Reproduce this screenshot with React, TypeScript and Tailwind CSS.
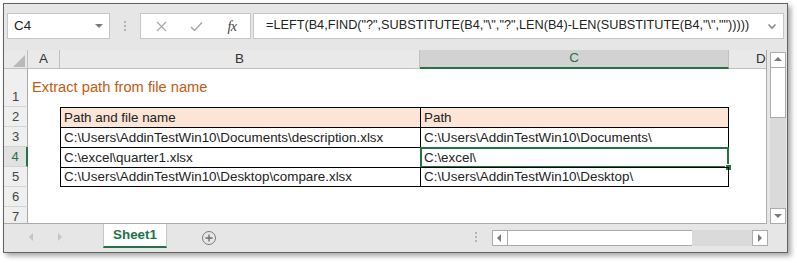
import React from "react"

interface Row {
  n: number
  h: number
  b?: string
  c?: string
  head?: boolean
  sel?: boolean
  last?: boolean
}

const rows: Row[] = [
  { n: 1, h: 38 },
  { n: 2, h: 20, b: "Path and file name", c: "Path", head: true },
  { n: 3, h: 20, b: "C:\\Users\\AddinTestWin10\\Documents\\description.xlsx", c: "C:\\Users\\AddinTestWin10\\Documents\\" },
  { n: 4, h: 20, b: "C:\\excel\\quarter1.xlsx", c: "C:\\excel\\", sel: true },
  { n: 5, h: 20, b: "C:\\Users\\AddinTestWin10\\Desktop\\compare.xlsx", c: "C:\\Users\\AddinTestWin10\\Desktop\\", last: true },
  { n: 6, h: 20 },
  { n: 7, h: 20 },
]

const formula = '=LEFT(B4,FIND("?",SUBSTITUTE(B4,"\\","?",LEN(B4)-LEN(SUBSTITUTE(B4,"\\","")))))'

function Arrow({ dir, color = "#7b7b7b" }: { dir: "up" | "down" | "left" | "right"; color?: string }) {
  const pts = {
    up: "1,6 5,2 9,6",
    down: "1,3 5,7 9,3",
    left: "6,1 2,5 6,9",
    right: "3,1 7,5 3,9",
  }[dir]
  return (
    <svg width="10" height="10" viewBox="0 0 10 10">
      <polygon points={pts} fill={color} />
    </svg>
  )
}

function ScrollBtn({ dir, className = "" }: { dir: "up" | "down" | "left" | "right"; className?: string }) {
  return (
    <div className={`w-[16px] h-[16px] shrink-0 bg-white border border-[#ababab] flex items-center justify-center ${className}`}>
      <Arrow dir={dir} />
    </div>
  )
}

export default function App() {
  return (
    <div className="w-[797px] h-[263px] bg-white pt-[3px] pl-[3px] font-['Liberation_Sans',Arial,sans-serif] text-[#222]">
      <div className="w-[785px] h-[250px] border border-[#626262] bg-[#e6e6e6] flex flex-col shadow-[3px_3px_5px_rgba(0,0,0,0.35)]">
        {/* formula bar */}
        <div className="h-[46px] shrink-0 flex items-start pt-[9px] pl-[3px] pr-[3px]">
          <div className="w-[103px] h-[26px] bg-white border border-[#c6c6c6] flex items-center justify-between pl-[6px] pr-[5px]">
            <span className="text-[13.4px]">C4</span>
            <svg width="10" height="6" viewBox="0 0 10 6">
              <polygon points="1,1 9,1 5,5" fill="#7a7a7a" />
            </svg>
          </div>
          <div className="w-[30px] h-[26px] flex flex-col items-center justify-center gap-[2px]">
            <span className="w-[2px] h-[2px] bg-[#b4b4b4]" />
            <span className="w-[2px] h-[2px] bg-[#b4b4b4]" />
            <span className="w-[2px] h-[2px] bg-[#b4b4b4]" />
          </div>
          <div className="w-[111px] h-[26px] bg-white border border-[#c6c6c6] flex items-center">
            <div className="w-[38px] flex justify-center pl-[3px]">
              <svg width="11" height="11" viewBox="0 0 11 11">
                <path d="M1 1 L10 10 M10 1 L1 10" stroke="#a8a8a8" strokeWidth="1.2" />
              </svg>
            </div>
            <div className="w-[35px] flex justify-center">
              <svg width="13" height="11" viewBox="0 0 13 11">
                <path d="M1 6 L4.5 9.5 L12 1.5" stroke="#a8a8a8" strokeWidth="1.5" fill="none" />
              </svg>
            </div>
            <div className="w-[36px] flex justify-center">
              <span className="font-['Liberation_Serif',serif] italic text-[14px] text-[#444] tracking-[-0.5px]">fx</span>
            </div>
          </div>
          <div className="flex-1 h-[26px] ml-[2px] bg-white border border-[#c6c6c6] flex items-center pl-[12px] pr-[6px]">
            <span className="flex-1 text-[12.7px] whitespace-nowrap">{formula}</span>
            <svg width="10" height="7" viewBox="0 0 10 7">
              <path d="M1.5 1.5 L5 5 L8.5 1.5" stroke="#8a8a8a" strokeWidth="1.6" fill="none" />
            </svg>
          </div>
        </div>

        {/* sheet area */}
        <div className="h-[174px] shrink-0 flex">
          <div className="w-[763px] flex flex-col border-r border-b border-[#ababab] overflow-hidden">
            {/* column headers */}
            <div className="h-[19px] shrink-0 flex text-[13.4px] text-[#333] bg-[#e9e9e9]">
              <div className="w-[24px] border-r border-b border-[#c0c0c0] flex items-end justify-end pr-[2px] pb-[1px]">
                <svg width="12" height="12" viewBox="0 0 12 12">
                  <polygon points="12,0 12,12 0,12" fill="#b9b9b9" />
                </svg>
              </div>
              <div className="w-[32px] border-r border-b border-[#c0c0c0] flex items-center justify-center">A</div>
              <div className="w-[360px] border-r border-b border-[#c0c0c0] flex items-center justify-center">B</div>
              <div className="w-[309px] border-r border-[#c0c0c0] border-b-2 border-b-[#217346] bg-[#d2d2d2] text-[#217346] flex items-center justify-center">C</div>
              <div className="flex-1 border-b border-[#c0c0c0] flex items-center pl-[27px]">D</div>
            </div>
            {/* grid */}
            <div className="flex-1 bg-white">
              {rows.map((r) => (
                <div key={r.n} className="flex" style={{ height: r.h }}>
                  <div
                    className={`w-[24px] shrink-0 border-b border-[#d4d4d4] flex items-end justify-center pb-[1px] text-[13px] leading-[16px] ${
                      r.sel ? "bg-[#e1e1e1] text-[#217346] border-r-2 border-r-[#217346]" : "bg-[#efefef] text-[#444] border-r border-r-[#ababab]"
                    }`}
                  >
                    {r.n}
                  </div>
                  <div className="w-[32px] shrink-0 relative">
                    {r.n === 1 && (
                      <div className="absolute inset-0 flex items-center pl-[4px] pb-[1px] whitespace-nowrap text-[14.7px] text-[#c55a11]">
                        Extract path from file name
                      </div>
                    )}
                  </div>
                  {r.b !== undefined ? (
                    <>
                      <div
                        className={`w-[360px] shrink-0 border-l border-t border-black flex items-end pl-[3px] pb-[1px] text-[13.4px] leading-[16px] whitespace-nowrap ${
                          r.last ? "border-b" : ""
                        } ${r.head ? "bg-[#fce4d6]" : ""}`}
                      >
                        {r.b}
                      </div>
                      <div
                        className={`w-[309px] shrink-0 relative border-l border-t border-r border-black flex items-end pl-[3px] pb-[1px] text-[13.4px] leading-[16px] whitespace-nowrap ${
                          r.last ? "border-b" : ""
                        } ${r.head ? "bg-[#fce4d6]" : ""}`}
                      >
                        {r.c}
                        {r.sel && (
                          <>
                            <div className="absolute -left-[1px] -top-[1px] -right-[1px] -bottom-[1px] border-2 border-[#217346]" />
                            <div className="absolute -right-[4px] -bottom-[4px] w-[7px] h-[7px] bg-[#217346] border border-white" />
                          </>
                        )}
                      </div>
                    </>
                  ) : null}
                </div>
              ))}
            </div>
          </div>
          {/* vertical scrollbar */}
          <div className="flex-1 flex flex-col pl-[3px] pt-[2px]">
            <ScrollBtn dir="up" className="h-[15px]" />
            <div className="w-[16px] h-[50px] bg-white border border-[#ababab] border-t-0" />
            <div className="w-[16px] flex-1 bg-[#dadada]" />
            <ScrollBtn dir="down" className="h-[15px]" />
          </div>
        </div>

        {/* sheet tabs */}
        <div className="flex-1 flex items-start">
          <div className="w-[99px] h-[26px] flex items-center pl-[23px] gap-[18px]">
            <Arrow dir="left" color="#c4c4c4" />
            <Arrow dir="right" color="#c4c4c4" />
          </div>
          <div className="w-[64px] h-[24px] bg-white border-b-2 border-[#217346] border-x border-x-[#c6c6c6] flex items-center justify-center text-[13.4px] font-bold text-[#217346]">
            Sheet1
          </div>
          <div className="ml-[35px] mt-[7px] w-[14px] h-[14px] rounded-full border border-[#7a7a7a] flex items-center justify-center">
            <svg width="8" height="8" viewBox="0 0 8 8">
              <path d="M4 0.5 V7.5 M0.5 4 H7.5" stroke="#6a6a6a" strokeWidth="1.3" />
            </svg>
          </div>
          <div className="flex-1" />
          <div className="w-[16px] h-[26px] flex flex-col items-center justify-center gap-[2px]">
            <span className="w-[2px] h-[2px] bg-[#b4b4b4]" />
            <span className="w-[2px] h-[2px] bg-[#b4b4b4]" />
            <span className="w-[2px] h-[2px] bg-[#b4b4b4]" />
          </div>
          <div className="w-[276px] ml-[8px] mt-[6px] h-[16px] flex">
            <ScrollBtn dir="left" />
            <div className="w-[184px] h-[16px] bg-white border-y border-[#ababab]" />
            <div className="flex-1 h-[16px] bg-[#dadada]" />
            <ScrollBtn dir="right" />
          </div>
          <div className="w-[19px]" />
        </div>
      </div>
    </div>
  )
}
